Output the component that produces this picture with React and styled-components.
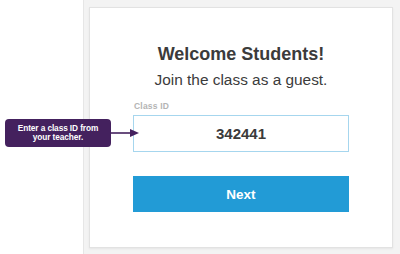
import React from "react";
import styled, { createGlobalStyle } from "styled-components";

const GlobalStyle = createGlobalStyle`
  html, body {
    margin: 0;
    padding: 0;
    background: #ffffff;
  }
  body {
    font-family: "Liberation Sans", Arial, sans-serif;
  }
`;

const Page = styled.div`
  position: relative;
  display: flex;
  width: 400px;
  height: 254px;
  overflow: hidden;
`;

const Gutter = styled.div`
  width: 83px;
  flex-shrink: 0;
  background: #ffffff;
`;

const Panel = styled.main`
  flex: 1;
  display: flex;
  background: #f3f3f3;
  border-left: 1px solid #e6e6e6;
  padding: 7px 7px 6px 5px;
`;

const Card = styled.section`
  flex: 1;
  display: flex;
  flex-direction: column;
  align-items: center;
  background: #ffffff;
  border: 1px solid #e2e2e2;
  box-shadow: 0 1px 2px rgba(0, 0, 0, 0.06);
  padding-top: 35px;
`;

const Title = styled.h1`
  margin: 0;
  font-size: 18px;
  line-height: 22px;
  font-weight: bold;
  color: #3b3b3b;
`;

const Subtitle = styled.p`
  margin: 5px 0 0;
  font-size: 15.4px;
  line-height: 20px;
  color: #3b3b3b;
`;

const Form = styled.form`
  width: 216px;
  display: flex;
  flex-direction: column;
  margin-top: 11px;
`;

const Label = styled.label`
  font-size: 8.5px;
  line-height: 10px;
  font-weight: bold;
  color: #b4b4b4;
  padding-left: 1px;
  letter-spacing: 0.2px;
`;

const Input = styled.input`
  box-sizing: border-box;
  margin-top: 4px;
  width: 100%;
  height: 37px;
  border: 1px solid #a6d6ee;
  border-radius: 0;
  outline: none;
  text-align: center;
  font-family: "Liberation Sans", Arial, sans-serif;
  font-size: 15px;
  font-weight: bold;
  color: #3b3b3b;
  background: #ffffff;
`;

const Button = styled.button`
  margin-top: 24px;
  height: 36px;
  border: none;
  border-radius: 0;
  background: #229bd6;
  color: #ffffff;
  font-family: "Liberation Sans", Arial, sans-serif;
  font-size: 13.5px;
  font-weight: bold;
  cursor: pointer;
`;

const Callout = styled.div`
  position: absolute;
  left: 5px;
  top: 119px;
  display: flex;
  align-items: center;
`;

const Bubble = styled.div`
  box-sizing: border-box;
  width: 106px;
  height: 28px;
  display: flex;
  align-items: center;
  justify-content: center;
  text-align: center;
  background: #44215e;
  border-radius: 4px;
  color: #ffffff;
  font-size: 8.3px;
  line-height: 9.5px;
  font-weight: bold;
  letter-spacing: -0.1px;
`;

const Arrow = () => (
  <svg width="28" height="10" viewBox="0 0 28 10">
    <line x1="0" y1="5" x2="20" y2="5" stroke="#44215e" strokeWidth="1.6" />
    <polygon points="19,1 28,5 19,9" fill="#44215e" />
  </svg>
);

export default function App() {
  return (
    <>
      <GlobalStyle />
      <Page>
        <Gutter />
        <Panel>
          <Card>
            <Title>Welcome Students!</Title>
            <Subtitle>Join the class as a guest.</Subtitle>
            <Form onSubmit={(e) => e.preventDefault()}>
              <Label htmlFor="class-id">Class ID</Label>
              <Input id="class-id" defaultValue="342441" />
              <Button type="submit">Next</Button>
            </Form>
          </Card>
        </Panel>
        <Callout>
          <Bubble>
            Enter a class ID from
            <br />
            your teacher.
          </Bubble>
          <Arrow />
        </Callout>
      </Page>
    </>
  );
}
